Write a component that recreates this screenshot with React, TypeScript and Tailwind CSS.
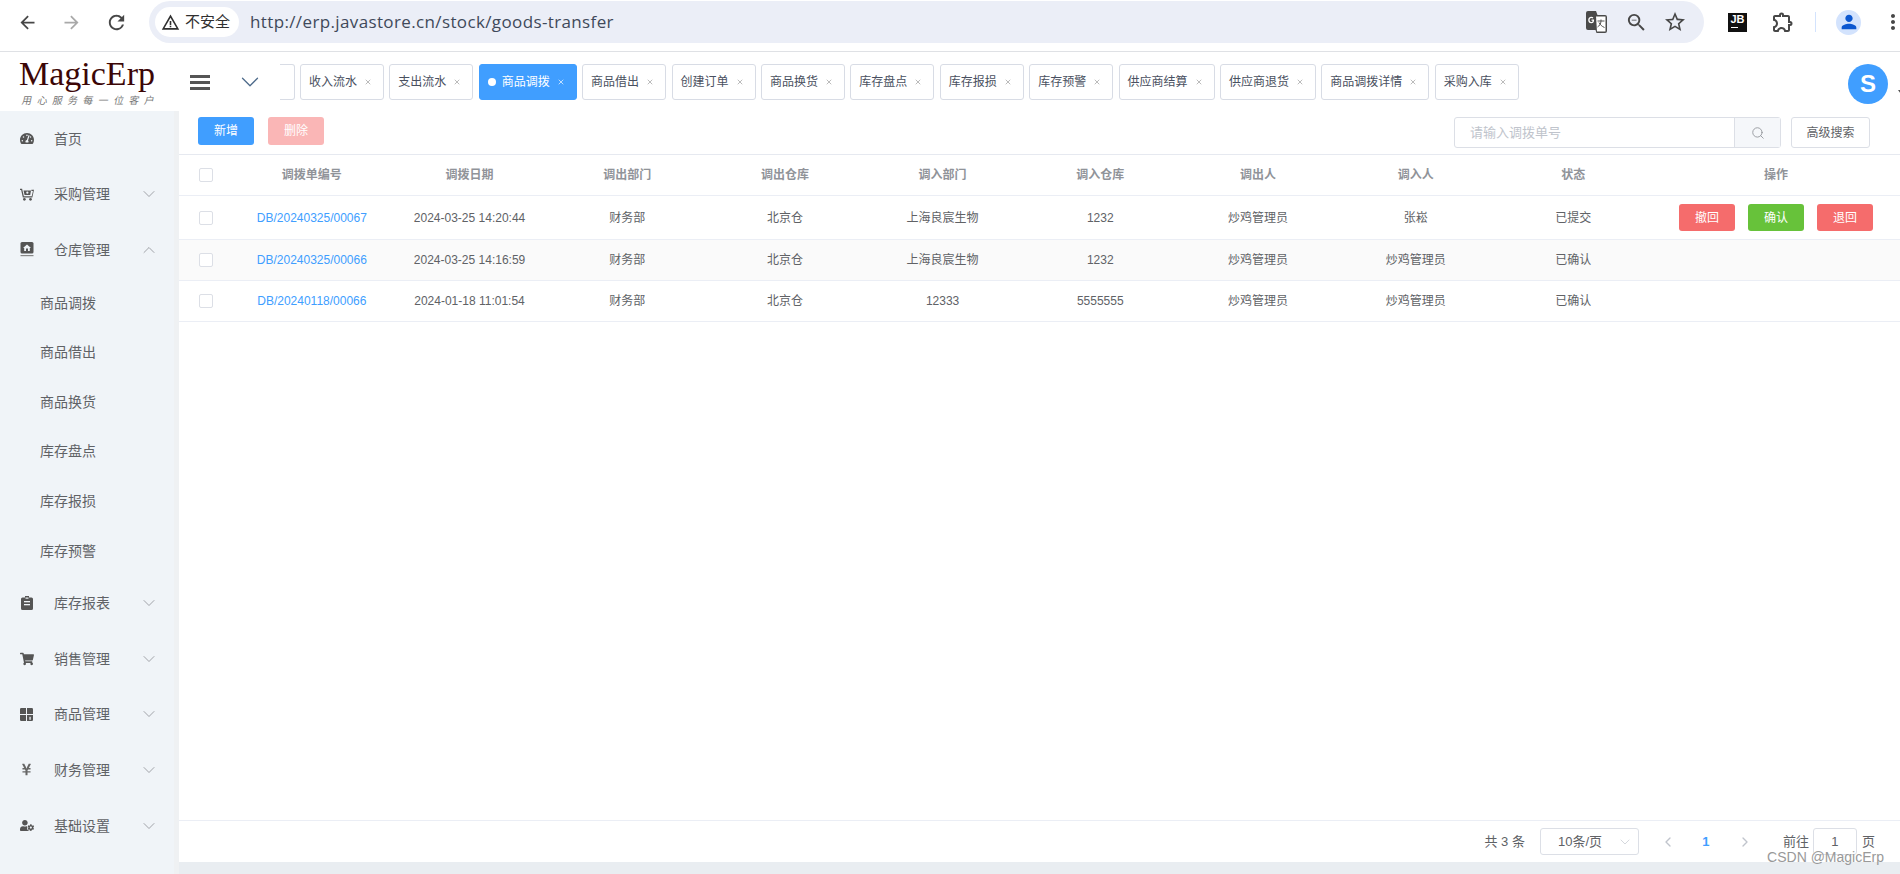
import React from "react";
import { ChevronDown, ChevronLeft, ChevronRight, ChevronUp, Search, X } from "lucide-react";
import {
  FaTachometerAlt,
  FaShoppingCart,
  FaYenSign,
  FaUserCog,
} from "react-icons/fa";
import {
  MdArrowBack,
  MdArrowForward,
  MdRefresh,
  MdOutlineStarBorder,
  MdMoreVert,
  MdPerson,
  MdOutlineExtension,
  MdZoomOut,
  MdWarningAmber,
} from "react-icons/md";

const CartStarIcon = () => (
  <svg width="16" height="15" viewBox="0 0 16 15" fill="#555">
    <path d="M0 1h2.4l2 8.6h9l1.4-6H13V2h3l-1.900 9H3.200L1.300 2.400H0z" />
    <path d="M4 3h8.600l-.9 5H5.200z" />
    <circle cx="5" cy="13" r="1.5" />
    <circle cx="12" cy="13" r="1.5" />
    <circle cx="8.4" cy="5.4" r="1.3" fill="#f0f4f8" />
  </svg>
);

const WarehouseIcon = () => (
  <svg width="14" height="15" viewBox="0 0 14 15" fill="#555">
    <rect x="0.5" y="0" width="13" height="11.5" rx="1.5" />
    <path d="M7 2.500 3 6h1.200v3h5.600V6H11z" fill="#f0f4f8" />
    <rect x="6" y="6.5" width="2" height="2.5" fill="#555" />
    <rect x="0.5" y="13" width="13" height="1.2" fill="#888" />
  </svg>
);

const ClipboardIcon = () => (
  <svg width="12" height="14" viewBox="0 0 12 14" fill="#555">
    <path d="M1.500 1.500H4V0h4v1.500h2.500A1.500 1.500 0 0 1 12 3v9.500a1.500 1.500 0 0 1-1.500 1.500h-9A1.500 1.500 0 0 1 0 12.500V3a1.500 1.500 0 0 1 1.500-1.500z" />
    <rect x="3" y="5" width="6" height="1.300" fill="#f0f4f8" />
    <rect x="3" y="8" width="6" height="1.300" fill="#f0f4f8" />
    <rect x="4.500" y="1.500" width="3" height="1.200" fill="#f0f4f8" />
  </svg>
);

const GridIcon = () => (
  <svg width="13" height="13" viewBox="0 0 13 13" fill="#555">
    <path d="M1.200 0H6v6H0V1.200A1.200 1.200 0 0 1 1.200 0z" />
    <path d="M7 0h4.800A1.200 1.200 0 0 1 13 1.200V6H7z" />
    <path d="M0 7h6v6H1.200A1.200 1.200 0 0 1 0 11.800z" />
    <path d="M7 7h6v4.800a1.200 1.200 0 0 1-1.200 1.200H7z" />
    <rect x="9.400" y="8.800" width="1.300" height="3" fill="#f0f4f8" />
  </svg>
);

const TranslateIcon = () => (
  <svg width="21" height="22" viewBox="0 0 21 22">
    <path d="M2 0h8l1.500 4H19a2 2 0 0 1 2 2v14a2 2 0 0 1-2 2H10.500l-1-3H2a2 2 0 0 1-2-2V2a2 2 0 0 1 2-2z" fill="#4a4a4a" />
    <path d="M10 5.500h9.500v15H11z" fill="#fff" />
    <path d="M11.500 10h7M15 8.500V10c0 3-1.800 5-3.500 6M13 11.500c1 2.200 3 4 5.500 5" stroke="#555" strokeWidth="1" fill="none" />
    <path d="M8 8.500H5.500v1.200h1.300c-.2.900-.8 1.300-1.500 1.300-1 0-1.700-.8-1.700-2s.7-2 1.700-2c.5 0 .9.200 1.200.5l.9-.9C7 6 6.200 5.700 5.300 5.700 3.400 5.700 2.200 7 2.200 9s1.200 3.300 3.100 3.300S8.100 11 8.100 9z" fill="#fff" />
  </svg>
);

const menus: { label: string; icon: React.ReactNode; arrow?: "up" | "down" }[] = [
  { label: "首页", icon: <FaTachometerAlt size={15} color="#555" /> },
  { label: "采购管理", icon: <CartStarIcon />, arrow: "down" },
  { label: "仓库管理", icon: <WarehouseIcon />, arrow: "up" },
];

const subMenus = ["商品调拨", "商品借出", "商品换货", "库存盘点", "库存报损", "库存预警"];

const menus2: { label: string; icon: React.ReactNode; arrow?: "up" | "down" }[] = [
  { label: "库存报表", icon: <ClipboardIcon />, arrow: "down" },
  { label: "销售管理", icon: <FaShoppingCart size={14} color="#555" />, arrow: "down" },
  { label: "商品管理", icon: <GridIcon />, arrow: "down" },
  { label: "财务管理", icon: <FaYenSign size={13} color="#666" />, arrow: "down" },
  { label: "基础设置", icon: <FaUserCog size={15} color="#555" />, arrow: "down" },
];

const tabs = [
  "收入流水",
  "支出流水",
  "商品调拨",
  "商品借出",
  "创建订单",
  "商品换货",
  "库存盘点",
  "库存报损",
  "库存预警",
  "供应商结算",
  "供应商退货",
  "商品调拨详情",
  "采购入库",
];

const headers = ["调拨单编号", "调拨日期", "调出部门", "调出仓库", "调入部门", "调入仓库", "调出人", "调入人", "状态", "操作"];

const rows = [
  {
    no: "DB/20240325/00067",
    date: "2024-03-25 14:20:44",
    toDept: "上海良宸生物",
    toStore: "1232",
    inUser: "张崧",
    status: "已提交",
    actions: true,
    rowClass: "h-[44px] bg-white",
  },
  {
    no: "DB/20240325/00066",
    date: "2024-03-25 14:16:59",
    toDept: "上海良宸生物",
    toStore: "1232",
    inUser: "炒鸡管理员",
    status: "已确认",
    actions: false,
    rowClass: "h-[41px] bg-[#fafafa]",
  },
  {
    no: "DB/20240118/00066",
    date: "2024-01-18 11:01:54",
    toDept: "12333",
    toStore: "5555555",
    inUser: "炒鸡管理员",
    status: "已确认",
    actions: false,
    rowClass: "h-[41px] bg-white",
  },
];

const gridCols = "grid grid-cols-[54px_repeat(9,157.7px)_1fr] items-center border-b border-[#ebeef5]";

const Checkbox = () => (
  <div className="ml-[20px] h-[14px] w-[14px] rounded-[2px] border border-[#dcdfe6] bg-white" />
);

const MenuRow = ({ label, icon, arrow }: { label: string; icon: React.ReactNode; arrow?: "up" | "down" }) => (
  <div className="flex h-[55.6px] items-center text-sm text-[#606266]">
    <div className="flex w-[54px] justify-center pr-[1px]">
      <div className="flex w-[14px] justify-center">{icon}</div>
    </div>
    <span className="w-[85px]">{label}</span>
    {arrow === "down" && <ChevronDown size={20} strokeWidth={1} color="#909399" />}
    {arrow === "up" && <ChevronUp size={20} strokeWidth={1} color="#909399" />}
  </div>
);

const Tab = ({ label, active }: { label: string; active: boolean }) => (
  <div
    className={
      active
        ? "flex h-[36px] shrink-0 items-center rounded-[3px] border border-[#409eff] bg-[#409eff] pr-[11px] pl-[8px] text-xs text-white"
        : "flex h-[36px] shrink-0 items-center rounded-[3px] border border-[#d8dce5] bg-white pr-[11px] pl-[8px] text-xs text-[#495060]"
    }
  >
    {active && <span className="mr-[6px] h-[8px] w-[8px] rounded-full bg-white" />}
    <span>{label}</span>
    <X className="ml-[7px]" size={8} strokeWidth={2} color={active ? "#ffffff" : "#999999"} />
  </div>
);

const App = () => {
  return (
    <div className="relative flex h-[874px] w-[1900px] flex-col overflow-hidden bg-white [font-family:'Liberation_Sans','Noto_Sans_CJK_SC',sans-serif]">
      {/* browser chrome */}
      <div className="flex h-[52px] shrink-0 items-start border-b border-[#dfe1e5] bg-white">
        <div className="flex h-[44px] w-[149px] shrink-0 items-center pl-[17px]">
          <MdArrowBack size={21} color="#474747" />
          <MdArrowForward className="ml-[23px]" size={21} color="#a9a9a9" />
          <MdRefresh className="ml-[23px]" size={23} color="#474747" />
        </div>
        <div className="mt-[1px] flex h-[42px] w-[1555px] shrink-0 items-center rounded-full bg-[#ebeef7] pr-[17px] pl-[6px]">
          <div className="flex h-[30px] w-[84px] shrink-0 items-center rounded-full bg-white pl-[6px] text-[15px] text-[#303030]">
            <MdWarningAmber size={19} color="#303030" />
            <span className="ml-[5px]">不安全</span>
          </div>
          <span className="ml-[11px] text-[17px] tracking-[0.37px] text-[#40495a] [font-family:'Open_Sans',sans-serif]">
            http://erp.javastore.cn/stock/goods-transfer
          </span>
          <div className="ml-auto flex items-center">
            <TranslateIcon />
            <MdZoomOut className="ml-[18px]" size={23} color="#474747" />
            <MdOutlineStarBorder className="ml-[15px]" size={24} color="#474747" />
          </div>
        </div>
        <div className="flex h-[44px] flex-1 items-center pl-[24px]">
          <div className="flex h-[19px] w-[19px] flex-col items-center bg-[#111] pt-[1px] text-[11px] leading-[11px] font-bold text-white">
            <span>JB</span>
            <span className="mt-[2px] mr-[7px] h-[1px] w-[7px] bg-white" />
          </div>
          <MdOutlineExtension className="ml-[24px]" size={24} color="#474747" />
          <div className="ml-[20px] h-[20px] w-[1px] bg-[#d3e3fd]" />
          <div className="ml-[20px] flex h-[25px] w-[25px] items-center justify-center rounded-full bg-[#d3e3fd]">
            <MdPerson size={22} color="#0b57d0" />
          </div>
          <MdMoreVert className="ml-[20px]" size={24} color="#474747" />
        </div>
      </div>

      <div className="flex min-h-0 flex-1">
        {/* left column */}
        <div className="flex w-[179px] shrink-0 flex-col">
          <div className="h-[59px] shrink-0 pt-[4px] pl-[19px]">
            <div className="text-[34px] leading-[36px] text-[#3c0606] [font-family:'Liberation_Serif',serif]">MagicErp</div>
            <div className="mt-[3px] -skew-x-12 pl-[3px] text-[10px] leading-[12px] tracking-[5.3px] whitespace-nowrap text-[#777]">
              用心服务每一位客户
            </div>
          </div>
          <div className="flex-1 border-r-[5px] border-[#eff1f3] bg-[#f0f4f8]">
            {menus.map((m) => (
              <MenuRow key={m.label} {...m} />
            ))}
            {subMenus.map((s) => (
              <div key={s} className="flex h-[49.6px] items-center pl-[40px] text-sm text-[#606266]">
                {s}
              </div>
            ))}
            {menus2.map((m) => (
              <MenuRow key={m.label} {...m} />
            ))}
          </div>
        </div>

        {/* right column */}
        <div className="flex min-w-0 flex-1 flex-col">
          <div className="flex h-[60px] shrink-0 items-center">
            <div className="ml-[11px] flex w-[20px] flex-col gap-[3px]">
              <span className="h-[3px] bg-[#555]" />
              <span className="h-[3px] bg-[#555]" />
              <span className="h-[3px] bg-[#555]" />
            </div>
            <ChevronDown className="ml-[25px]" size={30} strokeWidth={1} color="#4d6a8a" />
            <div className="ml-[14.5px] flex min-w-0 flex-1 items-center gap-[5.4px]">
              <div className="h-[36px] w-[15px] shrink-0 rounded-r-[3px] border-y border-r border-[#d8dce5]" />
              {tabs.map((t) => (
                <Tab key={t} label={t} active={t === "商品调拨"} />
              ))}
              <div className="mt-[4px] -mr-[4px] ml-auto flex shrink-0 items-center">
                <div className="flex h-[40px] w-[40px] items-center justify-center rounded-full bg-[#409eff] text-[24px] font-bold text-white">
                  S
                </div>
                <div className="mt-[16px] ml-[10px] h-0 w-0 border-x-[3px] border-t-[4px] border-x-transparent border-t-[#555]" />
              </div>
            </div>
          </div>

          <div className="flex h-[43px] shrink-0 items-start border-b border-[#e6e9f0] pt-[5px] pr-[30px] pl-[19px]">
            <button className="h-[28px] w-[56px] rounded-[3px] bg-[#409eff] text-xs text-white">新增</button>
            <button className="ml-[14px] h-[28px] w-[56px] rounded-[3px] bg-[#fab6b6] text-xs text-white">删除</button>
            <div className="ml-auto flex h-[31px] w-[327px] rounded-[3px] border border-[#dcdfe6]">
              <div className="flex flex-1 items-center pl-[15px] text-[13px] text-[#c0c4cc]">请输入调拨单号</div>
              <div className="flex w-[46px] items-center justify-center border-l border-[#dcdfe6] bg-[#f5f7fa]">
                <Search size={14} strokeWidth={1.5} color="#909399" />
              </div>
            </div>
            <button className="ml-[10px] h-[31px] w-[79px] rounded-[3px] border border-[#dcdfe6] bg-white text-xs text-[#606266]">
              高级搜索
            </button>
          </div>

          <div className="min-h-0 flex-1 text-center text-xs">
            <div className={`${gridCols} h-[41px] font-bold text-[#909399]`}>
              <Checkbox />
              {headers.map((h) => (
                <div key={h}>{h}</div>
              ))}
            </div>
            {rows.map((r) => (
              <div key={r.no} className={`${gridCols} ${r.rowClass} text-[#606266]`}>
                <Checkbox />
                <div className="text-[#409eff]">{r.no}</div>
                <div>{r.date}</div>
                <div>财务部</div>
                <div>北京仓</div>
                <div>{r.toDept}</div>
                <div>{r.toStore}</div>
                <div>炒鸡管理员</div>
                <div>{r.inUser}</div>
                <div>{r.status}</div>
                <div>
                  {r.actions && (
                    <div className="flex justify-center gap-[13px] text-white">
                      <button className="h-[27px] w-[56px] rounded-[3px] bg-[#f56c6c]">撤回</button>
                      <button className="h-[27px] w-[56px] rounded-[3px] bg-[#67c23a]">确认</button>
                      <button className="h-[27px] w-[56px] rounded-[3px] bg-[#f56c6c]">退回</button>
                    </div>
                  )}
                </div>
              </div>
            ))}
          </div>

          <div className="flex h-[42px] shrink-0 items-center justify-end border-t border-[#ebeef5] pr-[25px] text-[13px] text-[#606266]">
            <span>共 3 条</span>
            <div className="ml-[15px] flex h-[27px] w-[99px] items-center rounded-[3px] border border-[#dcdfe6] pr-[5px] pl-[17px]">
              <span>10条/页</span>
              <ChevronDown className="ml-auto" size={16} strokeWidth={1} color="#c0c4cc" />
            </div>
            <div className="ml-[14px] flex w-[30px] justify-center">
              <ChevronLeft size={16} strokeWidth={2} color="#c0c4cc" />
            </div>
            <div className="w-[46px] text-center font-bold text-[#409eff]">1</div>
            <div className="flex w-[32px] justify-center">
              <ChevronRight size={16} strokeWidth={2} color="#c0c4cc" />
            </div>
            <span className="ml-[22px]">前往</span>
            <div className="ml-[4px] flex h-[27px] w-[44px] items-center justify-center rounded-[3px] border border-[#dcdfe6]">1</div>
            <span className="ml-[5px]">页</span>
          </div>
          <div className="h-[12px] shrink-0 bg-[#e9edf1]" />
        </div>
      </div>

      <span className="absolute top-[847px] right-[16px] text-[14px] text-[#999]">CSDN @MagicErp</span>
    </div>
  );
};

export default App;
